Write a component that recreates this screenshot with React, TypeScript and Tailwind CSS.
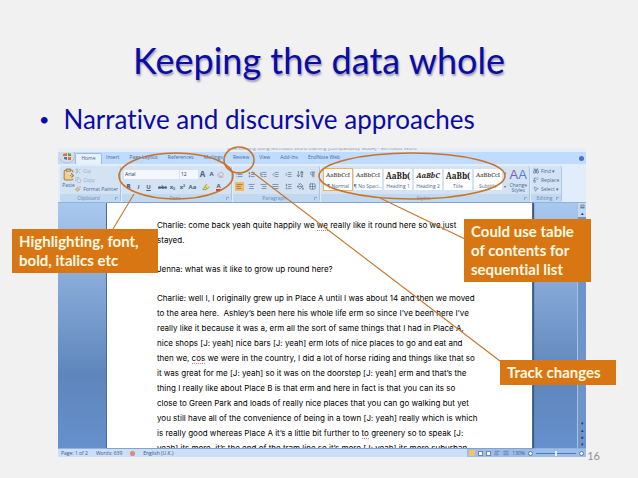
import type { ReactNode } from 'react';
import {
  AlignCenter,
  AlignJustify,
  AlignLeft,
  AlignRight,
  ArrowDownAZ,
  Binoculars,
  ClipboardPaste,
  Copy,
  Eraser,
  Grid2x2,
  Highlighter,
  IndentDecrease,
  IndentIncrease,
  List,
  ListOrdered,
  ListTree,
  MousePointer2,
  PaintBucket,
  Paintbrush,
  Pilcrow,
  Replace,
  Scissors,
} from 'lucide-react';

const tabs = ['Insert', 'Page Layout', 'References', 'Mailings', 'Review', 'View', 'Add-Ins', 'EndNote Web'];

const styles = [
  { name: '¶ Normal', sample: 'AaBbCcI', look: 'text-[6px]' },
  { name: '¶ No Spaci...', sample: 'AaBbCcI', look: 'text-[6px]' },
  { name: 'Heading 1', sample: 'AaBb(', look: 'text-[8px] font-bold' },
  { name: 'Heading 2', sample: 'AaBbC', look: 'text-[7px] font-bold italic' },
  { name: 'Title', sample: 'AaBb(', look: 'text-[8px] font-bold' },
  { name: 'Subtitle', sample: 'AaBbCcI', look: 'text-[6px]' },
];

function Typo({ children }: { children: ReactNode }) {
  return <span className="border-b border-dotted border-[#e07a7a]">{children}</span>;
}

const paragraphs: ReactNode[][] = [
  [
    <>Charlie: come back yeah quite happily we <Typo>we</Typo> really like it round here so we just</>,
    'stayed.',
  ],
  ['Jenna: what was it like to grow up round here?'],
  [
    'Charlie: well I, I originally grew up in Place A until I was about 14 and then we moved',
    <>to the area here.&nbsp; Ashley’s been here his whole life erm so since I’ve been here I’ve</>,
    'really like it because it was a, erm all the sort of same things that I had in Place A,',
    'nice shops [J: yeah] nice bars [J: yeah] erm lots of nice places to go and eat and',
    <>then we, <Typo>cos</Typo> we were in the country, I did a lot of horse riding and things like that so</>,
    'it was great for me [J: yeah] so it was on the doorstep [J: yeah] erm and that’s the',
    'thing I really like about Place B is that erm and here in fact is that you can its so',
    'close to Green Park and loads of really nice places that you can go walking but yet',
    'you still have all of the convenience of being in a town [J: yeah] really which is which',
    <>is really good whereas Place A it’s a little bit further to <Typo>to</Typo> greenery so to speak [J:</>,
    'yeah] its more, it’s the end of the tram line so it’s more [J: yeah] its more suburban',
  ],
];

function Group({ label, className, children }: { label: string; className: string; children: ReactNode }) {
  return (
    <section
      aria-label={label}
      className={`flex shrink-0 flex-col overflow-hidden rounded-xs border-r border-[#a9c4e4] bg-[#d3e3f4] ${className}`}
    >
      <div className="flex h-[28px] px-[2px]">{children}</div>
      <div className="flex h-[8px] items-center bg-[#c0d8f0] px-[2px] text-[#6c8ab4]">
        <span className="flex-1 text-center">{label}</span>
        <span className="size-[3px] border-t border-l border-[#8fa9cc]" />
      </div>
    </section>
  );
}

function Tool({ label, active, children }: { label: string; active?: boolean; children: ReactNode }) {
  return (
    <button
      type="button"
      aria-label={label}
      className={`flex size-[9px] items-center justify-center font-bold text-[#4b5d7c] ${active ? 'bg-[#f7b95a]' : ''}`}
    >
      {children}
    </button>
  );
}

function Ribbon() {
  return (
    <div className="flex h-[39px] gap-px overflow-hidden border-b border-[#8db2e3] bg-[#e1edfa] px-[2px] pt-[2px] text-[5px] leading-[8px] text-[#4a6796]">
      <Group label="Clipboard" className="w-[61px]">
        <button type="button" className="flex w-[18px] flex-col items-center pt-[2px]">
          <ClipboardPaste size={13} fill="#f2cf8d" color="#a4824e" strokeWidth={2} />
          Paste
        </button>
        <div className="flex flex-col items-start">
          <button type="button" className="flex h-[9px] items-center gap-[2px] text-[#9aa9bf]">
            <Scissors size={6} /> Cut
          </button>
          <button type="button" className="flex h-[9px] items-center gap-[2px] text-[#9aa9bf]">
            <Copy size={6} /> Copy
          </button>
          <button type="button" className="flex h-[9px] items-center gap-[2px] whitespace-nowrap">
            <Paintbrush size={6} color="#b58c2d" /> Format Painter
          </button>
        </div>
      </Group>
      <Group label="Font" className="w-[110px]">
        <div className="flex flex-col gap-[3px] pt-[3px]">
          <div className="flex h-[10px] items-center">
            <select aria-label="Font name" className="h-[9px] w-[55px] appearance-none bg-[#f4f8fd] px-px text-[#223355]">
              <option>Arial</option>
            </select>
            <select aria-label="Font size" className="ml-px h-[9px] w-[18px] appearance-none bg-[#f4f8fd] px-px text-[#223355]">
              <option>12</option>
            </select>
            <Tool label="Grow font"><span className="text-[8px]">A</span></Tool>
            <Tool label="Shrink font"><span className="text-[6px]">A</span></Tool>
            <Tool label="Clear formatting"><Eraser size={7} color="#b48a8a" /></Tool>
          </div>
          <div className="flex h-[9px] items-center gap-px text-[6px]">
            <Tool label="Bold"><b>B</b></Tool>
            <Tool label="Italic"><i>I</i></Tool>
            <Tool label="Underline"><u>U</u></Tool>
            <span className="w-[3px]" />
            <Tool label="Strikethrough"><s className="text-[5px]">abc</s></Tool>
            <Tool label="Subscript">x₂</Tool>
            <Tool label="Superscript">x²</Tool>
            <Tool label="Change case">Aa</Tool>
            <span className="w-[2px]" />
            <Tool label="Highlight"><Highlighter size={8} color="#8b7b28" fill="#e9dc5c" /></Tool>
            <span className="w-[2px]" />
            <Tool label="Font colour"><span className="border-b-2 border-red-500 leading-[6px]">A</span></Tool>
          </div>
        </div>
      </Group>
      <Group label="Paragraph" className="w-[87px]">
        <div className="flex flex-1 flex-col gap-[3px] pt-[3px]">
          <div className="flex h-[10px] items-center justify-between">
            <Tool label="Bullets"><List size={7} /></Tool>
            <Tool label="Numbering"><ListOrdered size={7} /></Tool>
            <Tool label="Multilevel list"><ListTree size={7} /></Tool>
            <Tool label="Decrease indent"><IndentDecrease size={7} /></Tool>
            <Tool label="Increase indent"><IndentIncrease size={7} /></Tool>
            <Tool label="Sort"><ArrowDownAZ size={8} /></Tool>
            <Tool label="Show marks"><Pilcrow size={7} /></Tool>
          </div>
          <div className="flex h-[9px] items-center justify-between">
            <Tool label="Align left" active><AlignLeft size={7} /></Tool>
            <Tool label="Centre"><AlignCenter size={7} /></Tool>
            <Tool label="Align right"><AlignRight size={7} /></Tool>
            <Tool label="Justify"><AlignJustify size={7} /></Tool>
            <Tool label="Line spacing"><ListOrdered size={7} /></Tool>
            <Tool label="Shading"><PaintBucket size={7} /></Tool>
            <Tool label="Borders"><Grid2x2 size={7} /></Tool>
          </div>
        </div>
      </Group>
      <Group label="Styles" className="w-[209px]">
        <div className="flex py-[2px]">
          {styles.map((style, i) => (
            <button
              key={style.name}
              type="button"
              className={`flex h-[23px] w-[30px] flex-col items-center justify-between overflow-hidden whitespace-nowrap border bg-white ${
                i === 0 ? 'border-[#efb54b]' : 'border-[#d3e3f4]'
              }`}
            >
              <span className={`font-['Noto_Serif','Liberation_Serif',serif] leading-[13px] text-[#1c1c1c] ${style.look}`}>
                {style.sample}
              </span>
              <span className="leading-[8px]">{style.name}</span>
            </button>
          ))}
        </div>
        <div className="ml-px flex w-[6px] flex-col justify-around text-[4px]">
          <span>▴</span>
          <span>▾</span>
        </div>
        <button type="button" className="flex flex-1 flex-col items-center leading-[5px]">
          <span className="font-['Liberation_Sans',sans-serif] text-[13px] leading-[17px] text-[#7c5cb8]">
            A<span className="text-[#4f83cf]">A</span>
          </span>
          Change
          <br />
          Styles ▾
        </button>
      </Group>
      <Group label="Editing" className="w-[31px]">
        <div className="flex flex-col items-start">
          <button type="button" className="flex h-[9px] items-center gap-[2px]">
            <Binoculars size={6} /> Find ▾
          </button>
          <button type="button" className="flex h-[9px] items-center gap-[2px]">
            <Replace size={6} /> Replace
          </button>
          <button type="button" className="flex h-[9px] items-center gap-[2px]">
            <MousePointer2 size={6} /> Select ▾
          </button>
        </div>
      </Group>
    </div>
  );
}

function WordWindow() {
  return (
    <div className="overflow-hidden bg-[#bfdbff] font-['Open_Sans',sans-serif]">
      <div className="h-[4px] overflow-hidden bg-[#e6eefa] text-center text-[5px] leading-[1px] text-[#8b98ac]">
        Interviewing using Microsoft Word training [Compatibility Mode] - Microsoft Word
      </div>
      <div className="flex h-[12px] items-center text-[5px] text-[#4a6796]">
        <svg className="ml-[2px] h-[12px] w-[15px]" viewBox="0 0 15 12" aria-label="Office button">
          <circle cx="7" cy="3" r="8" fill="#d5dce8" stroke="#9ba9c0" strokeWidth="0.6" />
          <path d="M3 2l4-1v3H3zM8 5h3v3H8z" fill="#e4702d" />
          <path d="M8 1l3 1v2H8z" fill="#5c9a45" />
          <path d="M4 5h3v3L4 7z" fill="#4678c0" />
        </svg>
        <button type="button" className="flex h-[11px] w-[27px] items-center justify-center self-end rounded-t-xs border border-b-0 border-[#9dbce4] bg-[#e7f1fc]">
          Home
        </button>
        <div className="flex flex-1 gap-[10px] pl-[4px] whitespace-nowrap">
          {tabs.map((tab) => (
            <button key={tab} type="button">
              {tab}
            </button>
          ))}
        </div>
        <button type="button" aria-label="Help" className="mr-[2px] size-[5px] rounded-full bg-[#4675bb]" />
      </div>
      <Ribbon />
      <div className="flex h-[245px] bg-linear-to-b from-[#a9c8ee] via-[#5f86bc] via-70% to-[#6590cc]">
        <article className="ml-[48px] flex flex-1 flex-col gap-[14px] overflow-hidden border-r border-l border-[#4c6b98] bg-white pt-[15px] pl-[50px] font-['Inter','Liberation_Sans',sans-serif] text-[8px] leading-[15px] text-black shadow-[1px_0_1px_#40597f]">
          {paragraphs.map((lines, i) => (
            <p key={i} className="whitespace-nowrap">
              {lines.map((line, j) => (
                <span key={j} className="block">
                  {line}
                </span>
              ))}
            </p>
          ))}
        </article>
        <div className="ml-[44px] flex w-[9px] flex-col items-center justify-between border-l border-[#a6c0e6] bg-[#6f94ca] text-[5px] leading-[7px] text-[#1f3868]">
          <div className="flex w-full flex-col items-center bg-[#c4d8f2]">
            <span>▤</span>
            <span>▴</span>
          </div>
          <div className="flex flex-col items-center">
            <span>▾</span>
            <span>▴</span>
            <span>●</span>
            <span>▾</span>
          </div>
        </div>
      </div>
      <div className="flex h-[9px] items-center gap-[8px] border-t border-[#8fb2e0] bg-[#cbdff8] pl-[3px] text-[5px] leading-[8px] text-[#3d567f]">
        <span>Page: 1 of 2</span>
        <span>Words: 639</span>
        <span className="size-[5px] rounded-xs bg-[#dc8a7c]" />
        <span>English (U.K.)</span>
        <div className="ml-auto flex h-full items-center gap-[3px] bg-[#9dbde9] px-[2px]">
          <span className="size-[6px] bg-[#f2c16b]" />
          <span className="size-[5px] border border-[#6d87b0] bg-white" />
          <span className="size-[5px] border border-[#6d87b0] bg-white" />
          <AlignLeft size={6} />
          <AlignJustify size={6} />
          <span>130%</span>
          <span className="size-[5px] rounded-full border border-[#5877aa] bg-white" />
          <input
            aria-label="Zoom"
            type="range"
            defaultValue="50"
            className="h-px w-[40px] appearance-none bg-[#5877aa] [&::-webkit-slider-thumb]:h-[5px] [&::-webkit-slider-thumb]:w-[2px] [&::-webkit-slider-thumb]:appearance-none [&::-webkit-slider-thumb]:bg-[#e6effb]"
          />
          <span className="size-[5px] rounded-full border border-[#5877aa] bg-white" />
        </div>
      </div>
    </div>
  );
}

function Callout({ className, children }: { className: string; children: ReactNode }) {
  return (
    <div className={`absolute bg-[#d97614] px-[7px] py-[3px] text-[15px] leading-[19px] font-bold whitespace-nowrap text-[#fffae3] ${className}`}>
      {children}
    </div>
  );
}

export default function App() {
  return (
    <main className="flex min-h-screen flex-col bg-[#f1f1f1] font-['Lato',sans-serif] text-[#0b0ba8] [font-variant-ligatures:none]">
      <h1 className="pt-[36px] text-center text-[36px] leading-[48px] [text-shadow:1px_2px_2px_#9a9aae]">
        Keeping the data whole
      </h1>
      <ul className="list-none pt-[18px] pl-[39px] text-[26px] leading-[34px]">
        <li className="flex gap-[14px]">
          <span className="text-[18px]">•</span>
          Narrative and discursive approaches
        </li>
      </ul>
      <figure className="relative mt-[12px] mr-[52px] ml-[58px]">
        <WordWindow />
        <svg
          className="pointer-events-none absolute top-0 left-0 overflow-visible"
          width="528"
          height="309"
          fill="none"
          stroke="#c87426"
          aria-hidden="true"
        >
          <ellipse cx="118" cy="28" rx="57" ry="23" strokeWidth="1.6" />
          <ellipse cx="181" cy="12" rx="15" ry="13" strokeWidth="1.6" />
          <ellipse cx="354" cy="28" rx="93" ry="23" strokeWidth="1.6" />
          <path d="M76 46L55 81M194 24L442 213M322 50L407 91" strokeWidth="1.1" />
        </svg>
        <Callout className="top-[81px] left-[-46px] w-[146px]">
          Highlighting, font,
          <br />
          bold, italics etc
        </Callout>
        <Callout className="top-[71px] left-[406px] w-[127px]">
          Could use table
          <br />
          of contents for
          <br />
          sequential list
        </Callout>
        <Callout className="top-[212px] left-[442px] w-[116px]">Track changes</Callout>
      </figure>
      <footer className="-mt-[9px] pr-[38px] text-right text-[11px] leading-[16px] text-[#909090]">16</footer>
    </main>
  );
}
